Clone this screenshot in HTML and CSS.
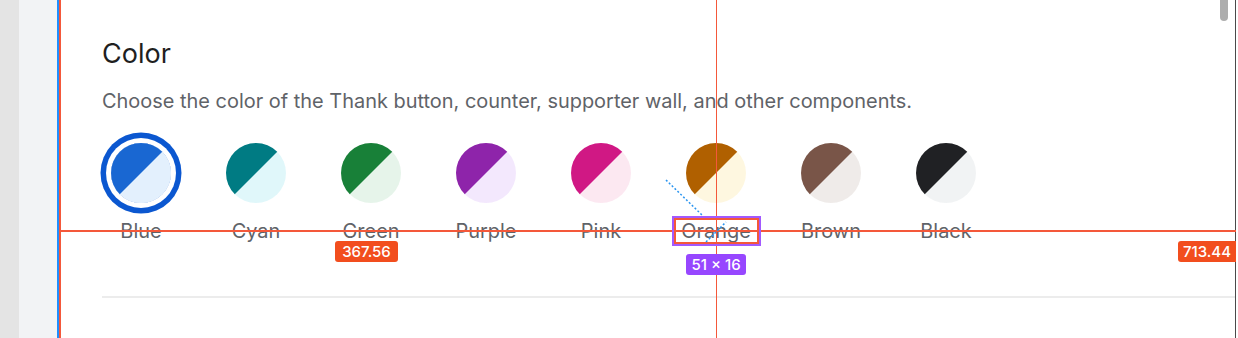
FILE: index.html
```html
<!DOCTYPE html>
<html lang="en">
<head>
<meta charset="utf-8">
<title>Color</title>
<link rel="stylesheet" href="styles.css">
</head>
<body>
<div class="app">
  <aside class="rail"></aside>
  <aside class="panel"></aside>
  <main class="settings">
    <div class="scroll-thumb"></div>
    <h2 class="title">Color</h2>
    <p class="desc">Choose the color of the Thank button, counter, supporter wall, and other components.</p>
    <ul class="swatches">
      <li class="swatch is-selected"><span class="dot dot-blue"></span><span class="name">Blue</span></li>
      <li class="swatch"><span class="dot dot-cyan"></span><span class="name">Cyan</span></li>
      <li class="swatch"><span class="dot dot-green"></span><span class="name">Green</span></li>
      <li class="swatch"><span class="dot dot-purple"></span><span class="name">Purple</span></li>
      <li class="swatch"><span class="dot dot-pink"></span><span class="name">Pink</span></li>
      <li class="swatch"><span class="dot dot-orange"></span><span class="name">Orange</span></li>
      <li class="swatch"><span class="dot dot-brown"></span><span class="name">Brown</span></li>
      <li class="swatch"><span class="dot dot-black"></span><span class="name">Black</span></li>
    </ul>
    <hr class="divider">
  </main>
</div>

<div class="overlay">
  <div class="guide guide-left"></div>
  <div class="guide guide-h"></div>
  <div class="guide guide-v"></div>
  <div class="sel-box"><div class="sel-inner"></div></div>
  <svg class="dots" width="1238" height="338" viewBox="0 0 1238 338">
    <line x1="666" y1="180" x2="702" y2="215" stroke="#2b95f0" stroke-width="1.5" stroke-dasharray="2 2"/>
    <line x1="706" y1="242" x2="726" y2="222" stroke="#2b95f0" stroke-width="1.5" stroke-dasharray="2 2"/>
  </svg>
  <div class="badge badge-red badge-a">367.56</div>
  <div class="badge badge-red badge-b">713.44</div>
  <div class="badge badge-purple badge-c">51 × 16</div>
</div>
</body>
</html>
```

FILE: styles.css
```css
* { box-sizing: border-box; }
html, body { margin: 0; padding: 0; background: #fff; }
body {
  width: 1238px;
  height: 338px;
  overflow: hidden;
  position: relative;
  font-family: Inter, Roboto, "Liberation Sans", Arial, sans-serif;
}
.app {
  display: flex;
  height: 338px;
  padding-right: 2px;
}
.rail { width: 19px; background: #e4e4e4; flex: none; }
.panel { width: 40px; background: #f2f3f5; border-right: 2px solid #1f8fff; flex: none; }
.settings {
  flex: 1;
  position: relative;
  border-right: 1px solid #4a4a4a;
  padding: 38px 0 0 43px;
}
.scroll-thumb {
  position: absolute;
  top: -6px;
  right: 7px;
  width: 8px;
  height: 27px;
  border-radius: 4px;
  background: #adadad;
}
.title {
  margin: 0;
  font-size: 27px;
  line-height: 32px;
  font-weight: 400;
  color: #1f1f1f;
}
.desc {
  margin: 17px 0 0;
  font-size: 19.95px;
  line-height: 28px;
  color: #5f6368;
}
.swatches {
  list-style: none;
  margin: 17px 0 0;
  padding: 0;
  display: flex;
  gap: 37px;
}
.swatch {
  width: 78px;
  display: flex;
  flex-direction: column;
  align-items: center;
}
.dot {
  width: 60px;
  height: 60px;
  margin: 10.5px 0;
  border-radius: 50%;
  flex: none;
}
.is-selected .dot {
  box-shadow: 0 0 0 5px #fff, 0 0 0 10.5px #0b57d0;
}
.dot-blue   { background: linear-gradient(135deg, #1967d2 49.4%, #e3f0fd 50.6%); }
.dot-cyan   { background: linear-gradient(135deg, #007b83 49.4%, #e0f7fa 50.6%); }
.dot-green  { background: linear-gradient(135deg, #188038 49.4%, #e6f4ea 50.6%); }
.dot-purple { background: linear-gradient(135deg, #8e24aa 49.4%, #f3e8fd 50.6%); }
.dot-pink   { background: linear-gradient(135deg, #d01884 49.4%, #fce8f1 50.6%); }
.dot-orange { background: linear-gradient(135deg, #b06000 49.4%, #fef7e0 50.6%); }
.dot-brown  { background: linear-gradient(135deg, #795548 49.4%, #efebe9 50.6%); }
.dot-black  { background: linear-gradient(135deg, #202124 49.4%, #f1f3f4 50.6%); }
.name {
  margin-top: 5px;
  font-size: 19.95px;
  line-height: 27px;
  color: #5f6368;
  white-space: nowrap;
}
.divider {
  margin: 51px 0 0;
  border: 0;
  height: 2px;
  background: #ececec;
}

/* measurement overlay */
.overlay {
  position: absolute;
  inset: 0;
  pointer-events: none;
}
.guide { position: absolute; background: #f4583a; }
.guide-left { left: 59px; top: 0; width: 2px; height: 338px; }
.guide-h { left: 60px; top: 230px; width: 1176px; height: 2px; }
.guide-v { left: 715.5px; top: 0; width: 1.6px; height: 338px; }
.sel-box {
  position: absolute;
  left: 672px;
  top: 216px;
  width: 89px;
  height: 30px;
  border: 2px solid #a259ff;
}
.sel-inner {
  width: 100%;
  height: 100%;
  border: 2px solid #f4583a;
}
.dots { position: absolute; left: 0; top: 0; }
.badge {
  position: absolute;
  height: 21px;
  line-height: 21px;
  font-size: 15px;
  font-weight: 500;
  color: #fff;
  border-radius: 3px;
  white-space: nowrap;
  text-align: center;
}
.badge-red { background: #f24e1e; }
.badge-purple { background: #9747ff; }
.badge-a { left: 335px; top: 241px; width: 63px; }
.badge-b { left: 1178px; top: 241px; width: 58px; border-radius: 3px 0 0 3px; }
.badge-c { left: 686px; top: 254px; width: 60px; }
```
